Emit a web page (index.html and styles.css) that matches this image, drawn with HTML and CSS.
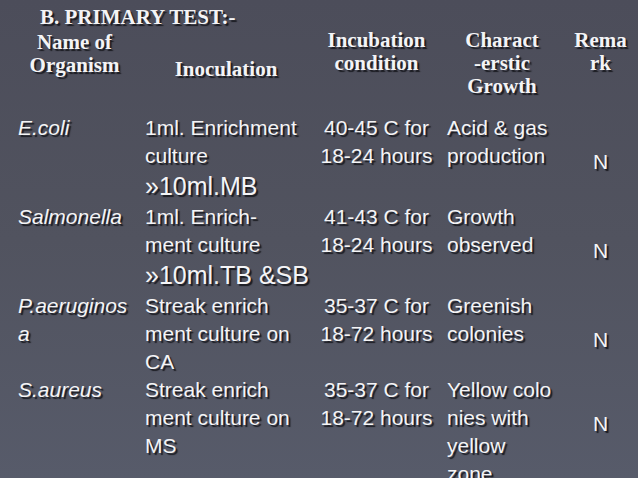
FILE: index.html
```html
<!DOCTYPE html>
<html>
<head>
<meta charset="utf-8">
<link rel="stylesheet" href="styles.css">
</head>
<body>
<div class="slide">
  <div class="title">B. PRIMARY TEST:-</div>
  <div class="grid head">
    <div class="h c1">Name of<br>Organism</div>
    <div class="h c2">Inoculation</div>
    <div class="h c3">Incubation<br>condition</div>
    <div class="h c4">Charact<br>-erstic<br>Growth</div>
    <div class="h c5">Rema<br>rk</div>
  </div>
  <div class="grid body">
    <div class="d org">E.coli</div>
    <div class="d ino">1ml. Enrichment<br>culture<div class="big">»10ml.MB</div></div>
    <div class="d inc">40-45 C for<br>18-24 hours</div>
    <div class="d gr">Acid &amp; gas<br>production</div>
    <div class="d rm">N</div>

    <div class="d org">Salmonella</div>
    <div class="d ino">1ml. Enrich-<br>ment culture<div class="big">»10ml.TB &amp;SB</div></div>
    <div class="d inc">41-43 C for<br>18-24 hours</div>
    <div class="d gr">Growth<br>observed</div>
    <div class="d rm">N</div>

    <div class="d org">P.aeruginos<br>a</div>
    <div class="d ino">Streak enrich<br>ment culture on<br>CA</div>
    <div class="d inc">35-37 C for<br>18-72 hours</div>
    <div class="d gr">Greenish<br>colonies</div>
    <div class="d rm">N</div>

    <div class="d org">S.aureus</div>
    <div class="d ino">Streak enrich<br>ment culture on<br>MS</div>
    <div class="d inc">35-37 C for<br>18-72 hours</div>
    <div class="d gr">Yellow colo<br>nies with<br>yellow<br>zone</div>
    <div class="d rm">N</div>
  </div>
</div>
</body>
</html>
```

FILE: styles.css
```css
html, body {
  margin: 0;
  padding: 0;
}
body {
  width: 638px;
  height: 478px;
  overflow: hidden;
  background: linear-gradient(180deg, #4c4d5a 0%, #51535f 50%, #575b6a 100%);
  color: #f4f4f6;
}
.slide {
  padding: 6px 0 0 10px;
  height: 472px;
  overflow: hidden;
}
.title {
  font-family: "Liberation Serif", "Times New Roman", serif;
  font-weight: bold;
  font-size: 21px;
  line-height: 23px;
  padding-left: 30px;
  text-shadow: 2px 2px 1px #1b1c22;
}
.grid {
  display: grid;
  grid-template-columns: 129px 174px 127px 124px 73px;
}
.h {
  font-family: "Liberation Serif", "Times New Roman", serif;
  font-weight: bold;
  font-size: 21px;
  line-height: 23px;
  text-align: center;
  text-shadow: 2px 2px 1px #1b1c22;
}
.h.c1 { padding-top: 2px; }
.h.c2 { padding-top: 29px; }
.body {
  margin-top: 16px;
}
.d {
  font-family: "Liberation Sans", Arial, sans-serif;
  font-size: 21px;
  line-height: 28px;
  text-shadow: 2px 2px 1px #1b1c22;
  white-space: nowrap;
}
.org {
  font-style: italic;
  padding-left: 8px;
}
.ino {
  padding-left: 6px;
}
.inc {
  text-align: center;
}
.gr {
  padding-left: 7px;
}
.rm {
  text-align: center;
  padding-top: 34px;
}
.big {
  font-size: 25px;
  line-height: 33px;
}
```
